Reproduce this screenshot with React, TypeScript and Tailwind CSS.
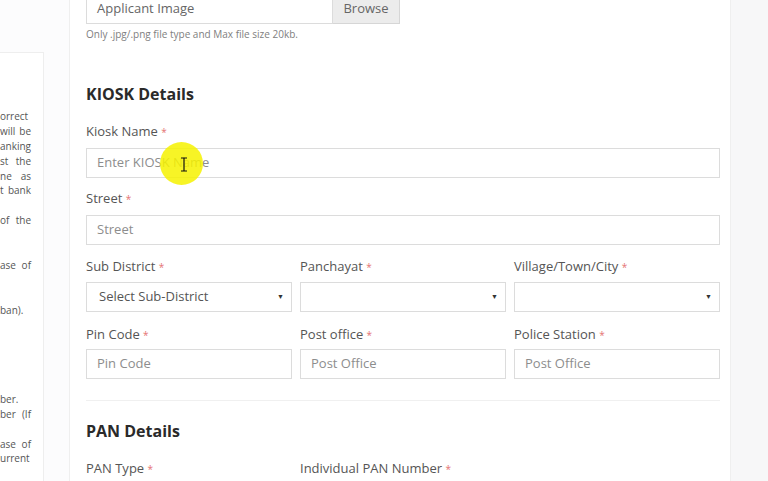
import React from "react";

const FONT = { fontFamily: '"Open Sans", "Noto Sans", Arial, sans-serif' };

function Label({ text }: { text: string }) {
  return (
    <div className="h-[18px] text-[13px] leading-[18px] text-[#555] whitespace-nowrap">
      {text} <span className="text-[#e57373] text-[10px]">*</span>
    </div>
  );
}

function TextInput({ placeholder }: { placeholder: string }) {
  return (
    <div className="h-[30px] border border-[#dcdcdc] bg-white flex items-center px-[10px] text-[13px] text-[#8d8d8d] whitespace-nowrap overflow-hidden">
      {placeholder}
    </div>
  );
}

function Select({ value }: { value?: string }) {
  return (
    <div className="h-[30px] border border-[#dcdcdc] bg-white flex items-center pl-[12px] pr-[7px] text-[13px] text-[#555]">
      <span className="flex-1 whitespace-nowrap overflow-hidden">{value ?? ""}</span>
      <span className="text-[7px] text-[#333]">▼</span>
    </div>
  );
}

const leftRows: string[] = [
  "orrect",
  "will be",
  "anking",
  "st the",
  "ne as",
  "t bank",
  "",
  "of the",
  "",
  "",
  "ase of",
  "",
  "",
  "ban).",
  "",
  "",
  "",
  "",
  "",
  "ber.",
  "ber (If",
  "",
  "ase of",
  "urrent",
];

export default function App() {
  return (
    <div
      className="w-[768px] h-[481px] overflow-hidden bg-[#fcfcfd] flex relative"
      style={FONT}
    >
      {/* Left panel */}
      <div className="w-[44px] shrink-0 pt-[52px]">
        <div className="h-full border-t border-r border-[#eeeeee] bg-white pt-[56px] pr-[12px]">
          {leftRows.map((t, i) => (
            <div
              key={i}
              className="h-[14.9px] whitespace-nowrap text-[10px] leading-[14.9px] text-[#555] text-justify [text-align-last:justify]"
            >
              {t}
            </div>
          ))}
        </div>
      </div>

      {/* Main card */}
      <div className="ml-[25px] w-[662px] shrink-0 border-l border-r border-[#efefef] bg-white pl-[16px] pr-[10px]">
        <div className="mt-[-6px] flex h-[30px]">
          <div className="w-[247px] border border-[#dcdcdc] bg-white flex items-center pl-[10px] text-[13px] text-[#666]">
            Applicant Image
          </div>
          <div className="w-[67px] border border-l-0 border-[#d6d6d6] bg-[#ececec] flex items-center justify-center text-[13px] text-[#666]">
            Browse
          </div>
        </div>
        <div className="mt-[4px] text-[10px] leading-[12px] text-[#808080]">
          Only .jpg/.png file type and Max file size 20kb.
        </div>

        <div className="mt-[43px] h-[22px] text-[16px] leading-[22px] font-bold text-[#2a2a2a]">
          KIOSK Details
        </div>

        <div className="mt-[17px]">
          <Label text="Kiosk Name" />
        </div>
        <div className="mt-[8px]">
          <TextInput placeholder="Enter KIOSK Name" />
        </div>

        <div className="mt-[11px]">
          <Label text="Street" />
        </div>
        <div className="mt-[8px]">
          <TextInput placeholder="Street" />
        </div>

        <div className="mt-[12px] grid grid-cols-3 gap-x-[8px]">
          <Label text="Sub District" />
          <Label text="Panchayat" />
          <Label text="Village/Town/City" />
        </div>
        <div className="mt-[7px] grid grid-cols-3 gap-x-[8px]">
          <Select value="Select Sub-District" />
          <Select />
          <Select />
        </div>

        <div className="mt-[13px] grid grid-cols-3 gap-x-[8px]">
          <Label text="Pin Code" />
          <Label text="Post office" />
          <Label text="Police Station" />
        </div>
        <div className="mt-[6px] grid grid-cols-3 gap-x-[8px]">
          <TextInput placeholder="Pin Code" />
          <TextInput placeholder="Post Office" />
          <TextInput placeholder="Post Office" />
        </div>

        <div className="mt-[21px] border-t border-[#f0f0f0]" />

        <div className="mt-[19px] h-[22px] text-[16px] leading-[22px] font-bold text-[#2a2a2a]">
          PAN Details
        </div>

        <div className="mt-[17px] grid grid-cols-3 gap-x-[8px]">
          <Label text="PAN Type" />
          <Label text="Individual PAN Number" />
          <div />
        </div>
      </div>

      {/* Right area */}
      <div className="flex-1 bg-[#f7f7f8]" />

      {/* Cursor highlight overlay */}
      <div className="absolute left-[160px] top-[142px] w-[43px] h-[43px] rounded-full bg-[#f6f200] opacity-85" />
      <div className="absolute left-[180px] top-[157px] w-[8px] h-[15px]">
        <svg width="8" height="15" viewBox="0 0 8 15">
          <path d="M1 1h2.5l0.5 0.5l0.5-0.5H7M4 1.5v12M1 14h2.5l0.5-0.5l0.5 0.5H7" fill="none" stroke="#111" strokeWidth="1.2" />
        </svg>
      </div>
    </div>
  );
}
